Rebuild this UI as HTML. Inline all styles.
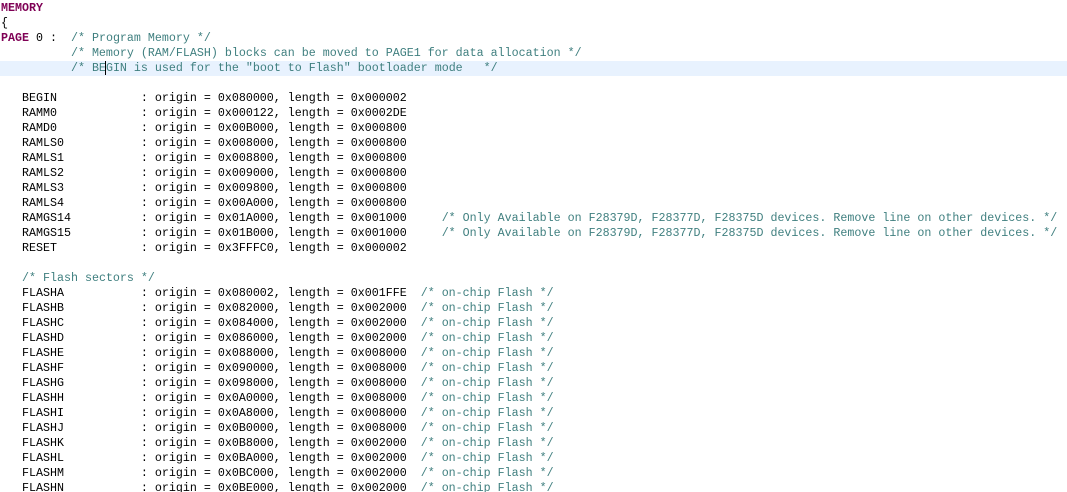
<!DOCTYPE html>
<html><head><meta charset="utf-8"><style>
html,body{margin:0;padding:0;background:#fff;width:1067px;height:492px;overflow:hidden}
pre{margin:0;padding:0 0 0 1px;font-family:"Liberation Mono",monospace;font-size:11.67px;line-height:15px;color:#000;position:relative;top:1px}
.k{color:#7f0055;font-weight:bold}
.c{color:#3f7f7f}
.hl{background:#e8f2fe;display:block;margin-left:-1px;padding-left:1px}
.cur{border-left:1px solid #000;margin-left:-1px}
</style></head><body><pre><span class="k">MEMORY</span>
{
<span class="k">PAGE</span> 0 :  <span class="c">/* Program Memory */</span>
          <span class="c">/* Memory (RAM/FLASH) blocks can be moved to PAGE1 for data allocation */</span>
<span class="hl">          <span class="c">/* BE<span class="cur">G</span>IN is used for the "boot to Flash" bootloader mode   */</span></span>
   BEGIN            : origin = 0x080000, length = 0x000002
   RAMM0            : origin = 0x000122, length = 0x0002DE
   RAMD0            : origin = 0x00B000, length = 0x000800
   RAMLS0           : origin = 0x008000, length = 0x000800
   RAMLS1           : origin = 0x008800, length = 0x000800
   RAMLS2           : origin = 0x009000, length = 0x000800
   RAMLS3           : origin = 0x009800, length = 0x000800
   RAMLS4           : origin = 0x00A000, length = 0x000800
   RAMGS14          : origin = 0x01A000, length = 0x001000     <span class="c">/* Only Available on F28379D, F28377D, F28375D devices. Remove line on other devices. */</span>
   RAMGS15          : origin = 0x01B000, length = 0x001000     <span class="c">/* Only Available on F28379D, F28377D, F28375D devices. Remove line on other devices. */</span>
   RESET            : origin = 0x3FFFC0, length = 0x000002

   <span class="c">/* Flash sectors */</span>
   FLASHA           : origin = 0x080002, length = 0x001FFE  <span class="c">/* on-chip Flash */</span>
   FLASHB           : origin = 0x082000, length = 0x002000  <span class="c">/* on-chip Flash */</span>
   FLASHC           : origin = 0x084000, length = 0x002000  <span class="c">/* on-chip Flash */</span>
   FLASHD           : origin = 0x086000, length = 0x002000  <span class="c">/* on-chip Flash */</span>
   FLASHE           : origin = 0x088000, length = 0x008000  <span class="c">/* on-chip Flash */</span>
   FLASHF           : origin = 0x090000, length = 0x008000  <span class="c">/* on-chip Flash */</span>
   FLASHG           : origin = 0x098000, length = 0x008000  <span class="c">/* on-chip Flash */</span>
   FLASHH           : origin = 0x0A0000, length = 0x008000  <span class="c">/* on-chip Flash */</span>
   FLASHI           : origin = 0x0A8000, length = 0x008000  <span class="c">/* on-chip Flash */</span>
   FLASHJ           : origin = 0x0B0000, length = 0x008000  <span class="c">/* on-chip Flash */</span>
   FLASHK           : origin = 0x0B8000, length = 0x002000  <span class="c">/* on-chip Flash */</span>
   FLASHL           : origin = 0x0BA000, length = 0x002000  <span class="c">/* on-chip Flash */</span>
   FLASHM           : origin = 0x0BC000, length = 0x002000  <span class="c">/* on-chip Flash */</span>
   FLASHN           : origin = 0x0BE000, length = 0x002000  <span class="c">/* on-chip Flash */</span>
</pre></body></html>
